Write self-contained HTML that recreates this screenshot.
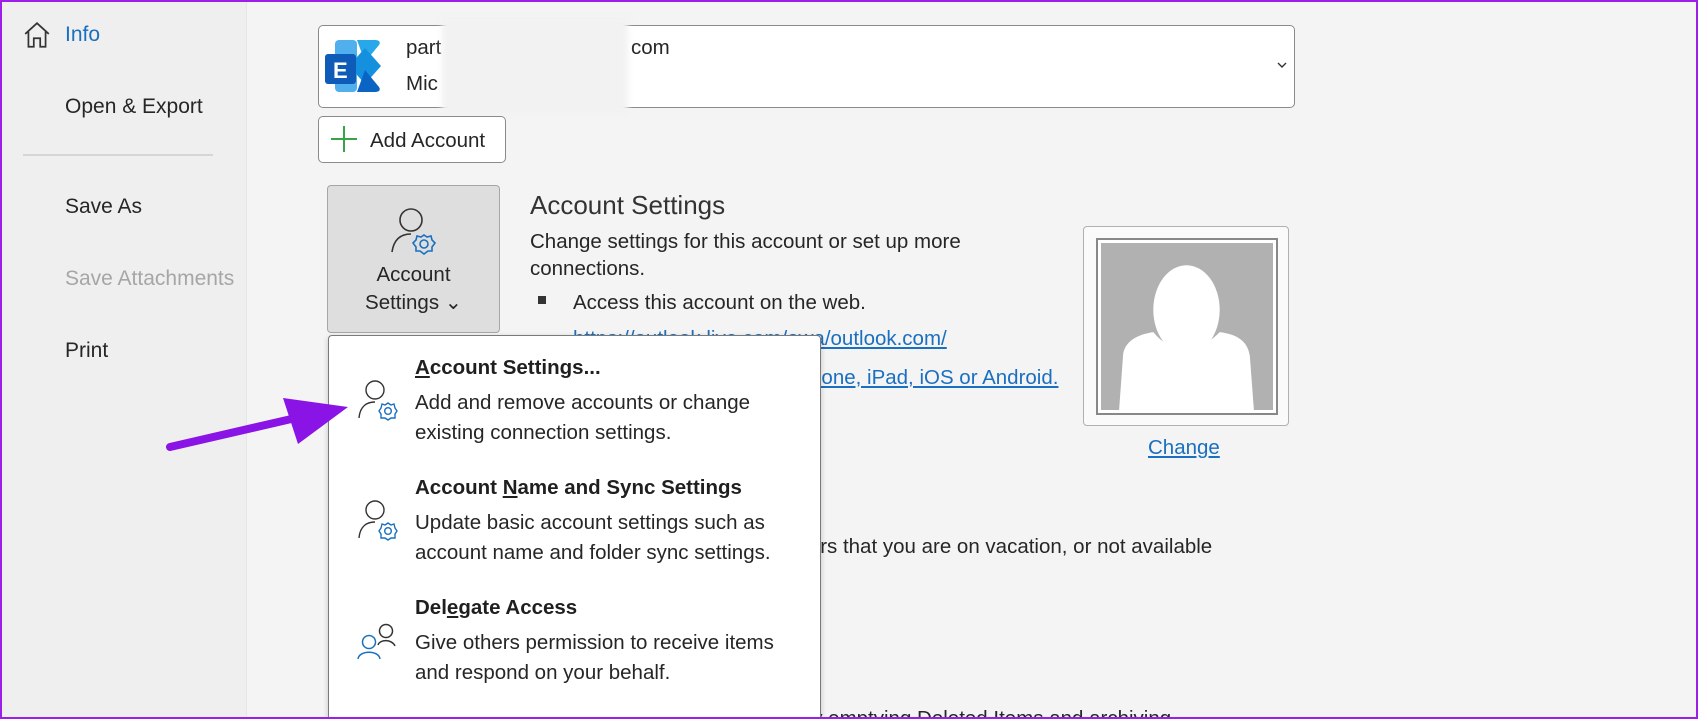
<!DOCTYPE html>
<html><head><meta charset="utf-8"><style>
*{box-sizing:border-box;margin:0;padding:0}
html,body{width:1698px;height:719px;overflow:hidden}
body{background:#f4f4f4;font-family:"Liberation Sans",sans-serif;color:#262626;position:relative}
.frame{position:absolute;left:0;top:0;width:1698px;height:719px;border:2px solid #9b1fe8;pointer-events:none;z-index:50}
.side{position:absolute;left:0;top:0;width:247px;height:719px;background:#efefef;border-right:1px solid #e6e6e6}
.a{position:absolute;white-space:nowrap}
.nav{font-size:21px;color:#262626}
.link{color:#1a6fc0;text-decoration:underline}
.menu{position:absolute;left:328px;top:335px;width:493px;height:384px;background:#fff;border:1px solid #7a7a7a;border-bottom:none;border-radius:4px 4px 0 0;box-shadow:0 2px 6px rgba(0,0,0,.2);z-index:10}
.mt{font-weight:bold;font-size:20.5px;color:#1f1f1f}
.md{font-size:20.5px;color:#262626;line-height:30px}
.t{font-size:20.5px}
</style></head><body>
<div class="side"></div>
<svg class="a" style="left:22px;top:20px" width="30" height="30" viewBox="0 0 28 28" fill="none" stroke="#333" stroke-width="1.6"><path d="M3 13 L14 3 L25 13 M6 11 V25 H11 V17 H17 V25 H22 V11"/></svg>
<div class="a nav" style="left:65px;top:23px;color:#1a6fc0">Info</div>
<div class="a nav" style="left:65px;top:95px">Open &amp; Export</div>
<div class="a" style="left:23px;top:154px;width:190px;height:2px;background:#d6d6d6"></div>
<div class="a nav" style="left:65px;top:195px">Save As</div>
<div class="a nav" style="left:65px;top:267px;color:#a6a6a6">Save Attachments</div>
<div class="a nav" style="left:65px;top:339px">Print</div>

<div class="a" style="left:318px;top:25px;width:977px;height:83px;background:#fff;border:1.5px solid #8a8a8a;border-radius:5px"></div>
<svg class="a" style="left:325px;top:40px" width="56" height="52" viewBox="0 0 56 52">
<rect x="10" y="0" width="22" height="52" rx="4" fill="#50b0ee"/>
<path d="M32 0 H50 C54 0 56 2 54 5 L40 22 Z" fill="#28a8ea"/>
<path d="M24 26 L40 8 L56 26 L40 44 Z" fill="#1490df"/>
<path d="M40 30 L54 47 C56 50 54 52 50 52 H32 Z" fill="#0a64c4"/>
<rect x="0" y="14" width="31" height="30" rx="3" fill="#0f5cb8"/>
<text x="8" y="38" font-family="Liberation Sans" font-weight="bold" font-size="22" fill="#fff">E</text>
</svg>
<div class="a t" style="left:406px;top:36px">part</div>
<div class="a t" style="left:631px;top:36px">com</div>
<div class="a t" style="left:406px;top:72px">Mic</div>
<div class="a" style="left:442px;top:16px;width:186px;height:98px;background:#f2f2f2;filter:blur(3px)"></div>
<svg class="a" style="left:1277px;top:62px" width="10" height="7" viewBox="0 0 10 7" fill="none" stroke="#333" stroke-width="1.4"><path d="M1 1 L5 5 L9 1"/></svg>

<div class="a" style="left:318px;top:116px;width:188px;height:47px;background:#fff;border:1.5px solid #8a8a8a;border-radius:5px"></div>
<svg class="a" style="left:331px;top:126px" width="26" height="26" viewBox="0 0 26 26" stroke="#3aa34a" stroke-width="2"><path d="M13 0 V26 M0 13 H26"/></svg>
<div class="a t" style="left:370px;top:129px">Add Account</div>

<div class="a" style="left:327px;top:185px;width:173px;height:148px;background:#dedede;border:1.5px solid #a6a6a6;border-radius:4px"></div>
<svg class="a" style="left:388px;top:205px" width="56" height="56" viewBox="0 0 56 56" fill="none" stroke-width="1.6"><circle cx="23" cy="15" r="11" stroke="#333"/><path d="M4 47 C6 33 14 29 23 29" stroke="#333"/><circle cx="36" cy="39" r="4" stroke="#1a6fc0"/><path d="M36 30 L39 32 L43 31 L44 35 L47 38 L44 42 L44 46 L40 46 L36 49 L32 46 L28 46 L28 42 L25 38 L28 35 L29 31 L33 32 Z" stroke="#1a6fc0"/></svg>
<div class="a t" style="left:327px;top:263px;width:173px;text-align:center">Account</div>
<div class="a t" style="left:327px;top:290px;width:173px;text-align:center">Settings &#8964;</div>

<div class="a" style="left:530px;top:190px;font-size:26px;color:#333">Account Settings</div>
<div class="a t" style="left:530px;top:230px">Change settings for this account or set up more</div>
<div class="a t" style="left:530px;top:257px">connections.</div>
<div class="a" style="left:538px;top:296px;width:8px;height:8px;background:#333"></div>
<div class="a t" style="left:573px;top:291px">Access this account on the web.</div>
<div class="a link t" style="left:573px;top:327px">https://outlook.live.com/owa/outlook.com/</div>
<div class="a link t" style="left:573px;top:366px">Get the Outlook app for iPhone, iPad, iOS or Android.</div>

<div class="a" style="left:1083px;top:226px;width:206px;height:200px;background:#fafafa;border:1.5px solid #b0b0b0;border-radius:4px"></div>
<div class="a" style="left:1096px;top:238px;width:182px;height:177px;border:2px solid #888;background:#fff;padding:3px">
<svg width="172" height="167" viewBox="0 0 171 165" preserveAspectRatio="none"><rect width="171" height="165" fill="#b1b1b1"/><ellipse cx="85" cy="66" rx="33" ry="44" fill="#fff"/><path d="M18 165 L22 110 C24 96 38 90 52 88 C62 100 72 104 84 104 C98 104 108 98 118 88 C134 90 146 96 148 112 L152 165 Z" fill="#fff"/></svg></div>
<div class="a link t" style="left:1148px;top:436px">Change</div>

<div class="a t" style="left:500px;top:535px">Use automatic replies to notify others that you are on vacation, or not available</div>
<div class="a t" style="left:500px;top:707px">Manage the size of your mailbox by emptying Deleted Items and archiving.</div>

<div class="menu">
<svg class="a" style="left:27px;top:39px" width="48" height="48" viewBox="0 0 48 48" fill="none" stroke-width="1.4"><circle cx="19" cy="15" r="9" stroke="#333"/><path d="M3 43 C4 31 11 27 19 27" stroke="#333"/><circle cx="32" cy="36" r="3.3" stroke="#1a6fc0"/><path d="M32 28 L35 30 L38 29 L39 33 L41 36 L39 39 L39 43 L35 43 L32 45 L29 43 L25 43 L25 39 L23 36 L25 33 L26 29 L29 30 Z" stroke="#1a6fc0"/></svg>
<div class="a mt" style="left:86px;top:20px"><u>A</u>ccount Settings...</div>
<div class="a md" style="left:86px;top:52px">Add and remove accounts or change<br>existing connection settings.</div>
<svg class="a" style="left:27px;top:159px" width="48" height="48" viewBox="0 0 48 48" fill="none" stroke-width="1.4"><circle cx="19" cy="15" r="9" stroke="#333"/><path d="M3 43 C4 31 11 27 19 27" stroke="#333"/><circle cx="32" cy="36" r="3.3" stroke="#1a6fc0"/><path d="M32 28 L35 30 L38 29 L39 33 L41 36 L39 39 L39 43 L35 43 L32 45 L29 43 L25 43 L25 39 L23 36 L25 33 L26 29 L29 30 Z" stroke="#1a6fc0"/></svg>
<div class="a mt" style="left:86px;top:140px">Account <u>N</u>ame and Sync Settings</div>
<div class="a md" style="left:86px;top:172px">Update basic account settings such as<br>account name and folder sync settings.</div>
<svg class="a" style="left:26px;top:282px" width="48" height="48" viewBox="0 0 48 48" fill="none" stroke-width="1.5"><circle cx="31" cy="13" r="6.5" stroke="#333"/><path d="M23 27 C25 21 37 21 40 28" stroke="#333"/><circle cx="14" cy="24" r="6.5" stroke="#1a6fc0"/><path d="M3 41 C4 32 24 32 25 41" stroke="#1a6fc0"/></svg>
<div class="a mt" style="left:86px;top:260px">Del<u>e</u>gate Access</div>
<div class="a md" style="left:86px;top:292px">Give others permission to receive items<br>and respond on your behalf.</div>
</div>

<svg class="a" style="left:0;top:0;z-index:20" width="1698" height="719"><path d="M170 447 L300 417" stroke="#8a14e6" stroke-width="8" stroke-linecap="round"/><path d="M348 407 L283 398 L298 444 Z" fill="#8a14e6"/></svg>
<div class="frame"></div>
</body></html>
